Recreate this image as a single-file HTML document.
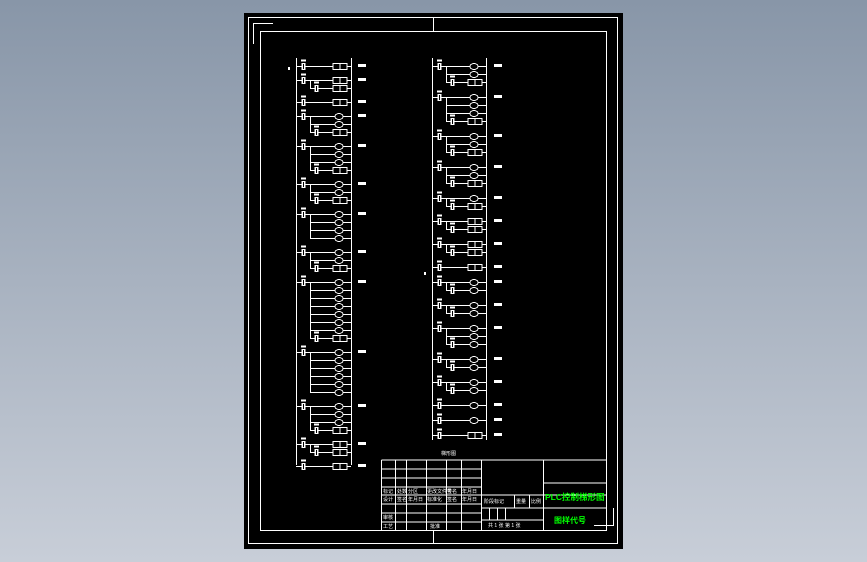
<!DOCTYPE html>
<html><head><meta charset="utf-8"><style>
html,body{margin:0;padding:0}
body{width:867px;height:562px;overflow:hidden;background:linear-gradient(#8896a8,#c8ced8);position:relative;font-family:"Liberation Sans","Noto Sans CJK SC",sans-serif}
svg{position:absolute;left:0;top:0}
</style></head><body>
<svg id="s" width="867" height="562" viewBox="0 0 867 562">
<rect x="244" y="13" width="379" height="536" fill="#000"/>
<g stroke="#fff" stroke-width="1" fill="none" shape-rendering="crispEdges">
<rect x="248.5" y="17.5" width="369" height="526"/>
<rect x="260.5" y="31.5" width="346" height="499"/>
<path d="M253.5 44V23.5H273"/>
<path d="M613.5 508V525.5H594"/>
<path d="M433.5 31V17"/>
<path d="M433.5 531V543"/>
<path d="M381.5 460H607M381.5 469H481M381.5 478H481M381.5 487H481M381.5 495H607M381.5 504H481M381.5 513H481M381.5 522H481M481 508H607M543 483H607M481 520H543"/>
<path d="M381.5 460V530M395.5 460V530M406.5 460V530M426.5 460V530M446.5 460V530M461.5 460V530M481.5 460V530M543.5 460V530M514.5 495V508M529.5 495V508M489.5 508V520M497.5 508V520M505.5 508V520"/>
</g>
<g fill="#fff" font-size="5" font-family="Liberation Sans,Noto Sans CJK SC,sans-serif">
<text x="383" y="493">标记</text><text x="397" y="493">处数</text><text x="408" y="493">分区</text><text x="427" y="493">更改文件号</text><text x="447" y="493">签名</text><text x="462" y="493">年月日</text>
<text x="383" y="501">设计</text><text x="397" y="501">签名</text><text x="408" y="501">年月日</text><text x="427" y="501">标准化</text><text x="447" y="501">签名</text><text x="462" y="501">年月日</text>
<text x="383" y="519">审核</text><text x="383" y="528">工艺</text><text x="430" y="528">批准</text>
<text x="484" y="503">阶段标记</text><text x="516" y="503">重量</text><text x="531" y="503">比例</text>
<text x="488" y="527">共 1 张  第 1 张</text>
<text x="441" y="455">梯形图</text>
</g>
<g fill="#00ff00" font-weight="bold" font-family="Liberation Sans,Noto Sans CJK SC,sans-serif">
<text x="545" y="500" font-size="8.5">PLC控制梯形图</text>
<text x="554" y="523" font-size="8">图样代号</text>
</g>
<g id="lad" stroke="#fff" stroke-width="1" fill="none" shape-rendering="crispEdges"></g>
<g id="lab" fill="#fff"></g>
</svg>
<script>
var g=document.getElementById('lad'),L=document.getElementById('lab');
function ln(a,b,c,d){var e=document.createElementNS('http://www.w3.org/2000/svg','line');e.setAttribute('x1',a);e.setAttribute('y1',b);e.setAttribute('x2',c);e.setAttribute('y2',d);g.appendChild(e);}
function el(t,o,p){var e=document.createElementNS('http://www.w3.org/2000/svg',t);for(var k in o)e.setAttribute(k,o[k]);(p||g).appendChild(e);return e;}
function ladder(x1,x2,y0,y1,groups,labX,gap){
 ln(x1+.5,y0-8,x1+.5,y1);ln(x2+.5,y0-8,x2+.5,y1);
 var y=y0;
 groups.forEach(function(gr){
  var n=gr.length, bx=x1+14;
  if(n>1) ln(bx+.5,y,bx+.5,y+(n-1)*8);
  el('rect',{x:labX,y:y-2,width:8,height:3,stroke:'none'},L);
  for(var i=0;i<n;i++){
   var yy=y+i*8+.5, t=gr[i];
   var sx=i==0?x1:bx;
   ln(sx,yy,x2,yy);
   var cx=(i==0?x1+6:bx+5);
   if(i==0||t.indexOf('k')>=0){el('rect',{x:cx,y:yy-3,width:3,height:6,fill:'#000'});ln(cx+.5,yy-3,cx+.5,yy+3);ln(cx+2.5,yy-3,cx+2.5,yy+3);el('rect',{x:cx-1,y:yy-7,width:5,height:2,fill:'#fff',stroke:'none'});}
   if(t[0]=='c'){el('ellipse',{cx:x2-12,cy:yy,rx:4,ry:3,fill:'#000'});}
   else {el('rect',{x:x2-18,y:yy-3,width:14,height:6,fill:'#000'});ln(x2-11,yy-3,x2-11,yy+3);}
  }
  y+=n*8+gap;
 });
}
ladder(296,351,66,465,[['b'],['b','bk'],['b'],['c','c','bk'],['c','c','c','bk'],['c','c','bk'],['c','c','c','c'],['c','c','bk'],['c','c','c','c','c','c','c','bk'],['c','c','c','c','c','c'],['c','c','c','bk'],['b','bk'],['b']],358,6);
ladder(432,486,66,440,[['c','c','bk'],['c','c','c','bk'],['c','c','bk'],['c','c','bk'],['c','bk'],['b','bk'],['b','bk'],['b'],['c','ck'],['c','ck'],['c','c','ck'],['c','ck'],['c','ck'],['c'],['c'],['b']],494,7);
el('rect',{x:288,y:67,width:2,height:3,stroke:'none'},L);
el('rect',{x:424,y:272,width:2,height:3,stroke:'none'},L);
</script>
</body></html>
